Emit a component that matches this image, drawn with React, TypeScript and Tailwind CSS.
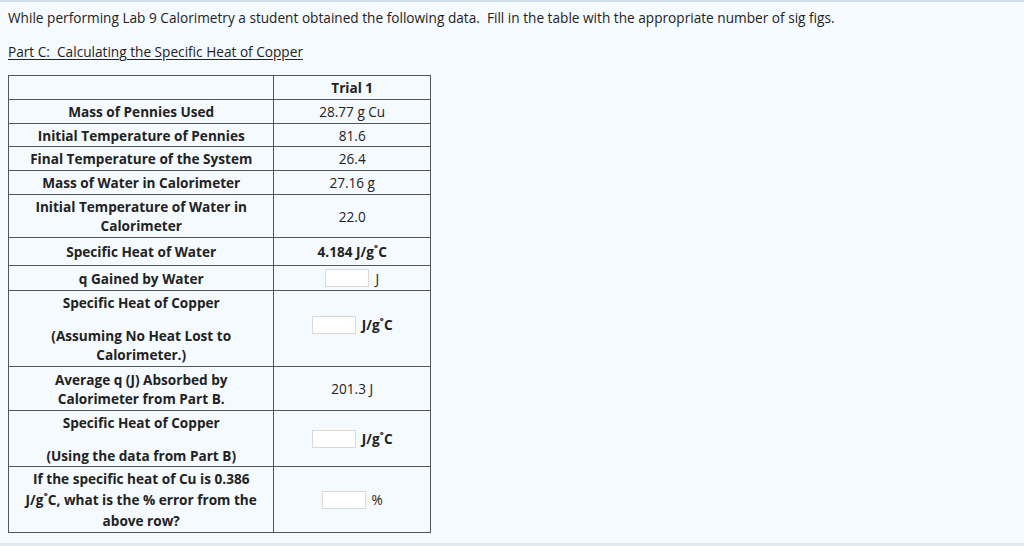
export default function App() {
  const unit = (u: string, bold = true, w = "w-[44px]") => (
    <div className="flex items-center justify-center gap-[6px]">
      <div className={`${w} h-[18px] bg-white border border-[#d9d9d9]`}></div>
      <span className={bold ? "font-bold" : ""}>{u}</span>
    </div>
  );

  return (
    <div
      className="w-[1024px] h-[546px] bg-[#f5faff] border-t-2 border-[#cfdfe9] text-[#222] flex flex-col"
      style={{ fontFamily: '"Open Sans", sans-serif' }}
    >
      <div className="flex-1 px-[8px]">
        <p className="text-[13.65px] leading-[18px] mt-[7px]">
          While performing Lab 9 Calorimetry a student obtained the following data.&nbsp; Fill in the table with the
          appropriate number of sig figs.
        </p>
        <p className="text-[13.65px] leading-[18px] mt-[16px] underline underline-offset-2">
          Part C:&nbsp; Calculating the Specific Heat of Copper
        </p>
        <table className="mt-[14px] border-collapse text-[13.6px] leading-[19px] text-center border border-[#555] w-[423px]">
          <colgroup>
            <col className="w-[266px]" />
            <col className="w-[157px]" />
          </colgroup>
          <tbody>
            <tr className="h-[24px]">
              <td className="border border-[#555]"></td>
              <td className="border border-[#555] font-bold">Trial 1</td>
            </tr>
            <tr className="h-[24px]">
              <td className="border border-[#555] font-bold">Mass of Pennies Used</td>
              <td className="border border-[#555]">28.77 g Cu</td>
            </tr>
            <tr className="h-[23px]">
              <td className="border border-[#555] font-bold">Initial Temperature of Pennies</td>
              <td className="border border-[#555]">81.6</td>
            </tr>
            <tr className="h-[24px]">
              <td className="border border-[#555] font-bold">Final Temperature of the System</td>
              <td className="border border-[#555]">26.4</td>
            </tr>
            <tr className="h-[24px]">
              <td className="border border-[#555] font-bold">Mass of Water in Calorimeter</td>
              <td className="border border-[#555]">27.16 g</td>
            </tr>
            <tr className="h-[43px]">
              <td className="border border-[#555] font-bold px-[20px]">
                Initial Temperature of Water in Calorimeter
              </td>
              <td className="border border-[#555]">22.0</td>
            </tr>
            <tr className="h-[28px]">
              <td className="border border-[#555] font-bold">Specific Heat of Water</td>
              <td className="border border-[#555] font-bold">4.184 J/g˚C</td>
            </tr>
            <tr className="h-[25px]">
              <td className="border border-[#555] font-bold">q Gained by Water</td>
              <td className="border border-[#555]">{unit("J", false)}</td>
            </tr>
            <tr className="h-[76px]">
              <td className="border border-[#555] font-bold px-[40px]">
                <div>Specific Heat of Copper</div>
                <div className="mt-[14px]">(Assuming No Heat Lost to Calorimeter.)</div>
              </td>
              <td className="border border-[#555] align-top pt-[24px]">{unit("J/g˚C")}</td>
            </tr>
            <tr className="h-[44px]">
              <td className="border border-[#555] font-bold px-[40px]">
                Average q (J) Absorbed by Calorimeter from Part B.
              </td>
              <td className="border border-[#555]">201.3 J</td>
            </tr>
            <tr className="h-[56px]">
              <td className="border border-[#555] font-bold">
                <div>Specific Heat of Copper</div>
                <div className="mt-[14px]">(Using the data from Part B)</div>
              </td>
              <td className="border border-[#555]">{unit("J/g˚C")}</td>
            </tr>
            <tr className="h-[66px]">
              <td className="border border-[#555] border-t-[#999] font-bold px-[8px] leading-[21px]">
                If the specific heat of Cu is 0.386 J/g˚C, what is the % error from the above row?
              </td>
              <td className="border border-[#555] border-t-[#999]">{unit("%", false)}</td>
            </tr>
          </tbody>
        </table>
      </div>
      <div className="h-[3px] bg-[#e3eaef]"></div>
    </div>
  );
}
